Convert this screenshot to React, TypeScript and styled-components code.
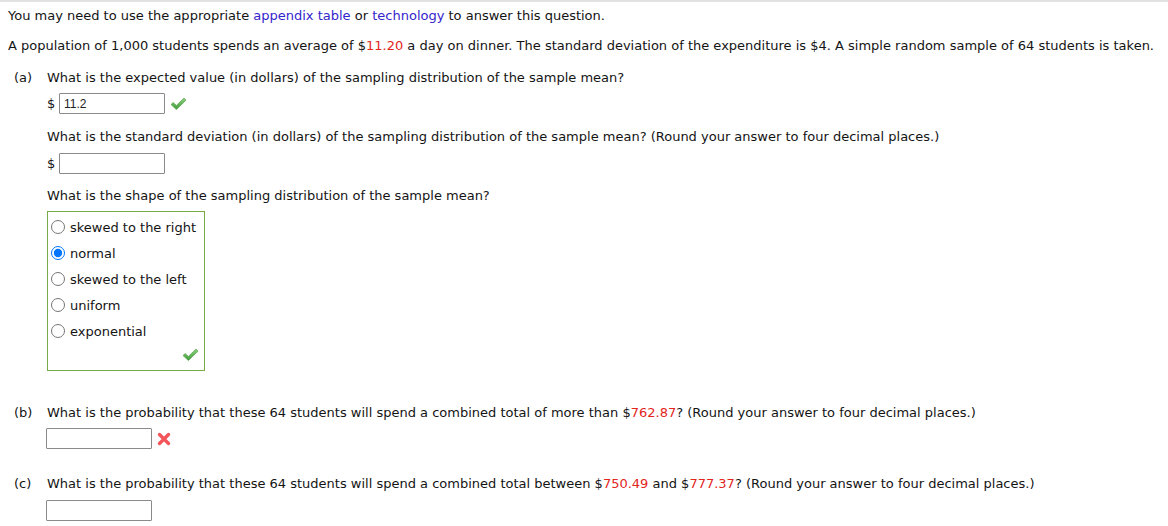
import React from 'react'
import styled, { createGlobalStyle } from 'styled-components'

const Global = createGlobalStyle`
  html, body {
    margin: 0;
    background: #fff;
  }
  body {
    border-top: 2px solid #e2e2e2;
    padding: 6px 8px 8px 8px;
    font-family: "DejaVu Sans", Verdana, sans-serif;
    font-size: 13px;
    color: #141414;
  }
`

const Line = styled.div<{ $gap?: number }>`
  line-height: 16px;
  margin-top: ${p => p.$gap ?? 0}px;
  white-space: nowrap;
`

const Link = styled.span`
  color: #3326cc;
`

const Num = styled.span`
  color: #e3261d;
`

const Part = styled.div<{ $gap: number }>`
  display: grid;
  grid-template-columns: 33px 1fr;
  padding-left: 6px;
  margin-top: ${p => p.$gap}px;
`

const Label = styled.div`
  line-height: 16px;
`

const Body = styled.div`
  display: flex;
  flex-direction: column;
`

const AnswerRow = styled.div<{ $gap?: number }>`
  display: flex;
  align-items: center;
  height: 21px;
  margin-top: ${p => p.$gap ?? 7}px;
`

const Dollar = styled.span`
  width: 12px;
  line-height: 16px;
`

const Field = styled.input<{ $shift?: number }>`
  box-sizing: border-box;
  width: 106px;
  height: 21px;
  margin: 0 0 0 ${p => p.$shift ?? 0}px;
  padding: 0 4px;
  border: 1px solid #8a8a8a;
  border-radius: 1px;
  font-family: "Liberation Sans", Arial, sans-serif;
  font-size: 12px;
  color: #222;
  outline: none;
`

const Choices = styled.div`
  box-sizing: border-box;
  width: 158px;
  margin-top: 7px;
  border: 1px solid #77ab48;
  padding: 2px 0 6px 3px;
  display: flex;
  flex-direction: column;
`

const Choice = styled.label`
  display: flex;
  align-items: center;
  height: 26px;
  gap: 5px;
`

const Radio = styled.input`
  width: 14px;
  height: 14px;
  margin: 0;
  accent-color: #0075ff;
`

const CheckSpot = styled.div`
  display: flex;
  justify-content: flex-end;
  padding-right: 5px;
  height: 20px;
  align-items: flex-end;
  padding-bottom: 2px;
  box-sizing: border-box;
`

const Mark = styled.span`
  display: inline-flex;
  margin-left: 5px;
`

const Check = () => (
  <svg width="17" height="14" viewBox="0 0 17 14">
    <defs>
      <linearGradient id="ck" x1="0" y1="0" x2="0" y2="1">
        <stop offset="0" stopColor="#8fd17e" />
        <stop offset="1" stopColor="#3e9a3a" />
      </linearGradient>
    </defs>
    <path d="M1 7.5 L3.2 5.5 L6.4 8.4 L14 1 L16 3.2 L6.4 12.6 Z" fill="url(#ck)" stroke="#4a9a40" strokeWidth="0.6" strokeLinejoin="round" />
  </svg>
)

const Cross = () => (
  <svg width="14" height="14" viewBox="0 0 14 14">
    <path d="M2.5 2.5 L11.5 11.5 M11.5 2.5 L2.5 11.5" stroke="#f2555a" strokeWidth="3.4" strokeLinecap="round" />
  </svg>
)

const shapes = ['skewed to the right', 'normal', 'skewed to the left', 'uniform', 'exponential']

const App = (): JSX.Element => {
  return (
    <>
      <Global />
      <Line>
        You may need to use the appropriate <Link>appendix table</Link> or <Link>technology</Link> to answer this question.
      </Line>
      <Line $gap={14}>
        A population of 1,000 students spends an average of $<Num>11.20</Num> a day on dinner. The standard deviation of the expenditure is $4. A simple random sample of 64 students is taken.
      </Line>

      <Part $gap={16}>
        <Label>(a)</Label>
        <Body>
          <Line>What is the expected value (in dollars) of the sampling distribution of the sample mean?</Line>
          <AnswerRow>
            <Dollar>$</Dollar>
            <Field defaultValue="11.2" />
            <Mark><Check /></Mark>
          </AnswerRow>
          <Line $gap={15}>What is the standard deviation (in dollars) of the sampling distribution of the sample mean? (Round your answer to four decimal places.)</Line>
          <AnswerRow $gap={8}>
            <Dollar>$</Dollar>
            <Field />
          </AnswerRow>
          <Line $gap={14}>What is the shape of the sampling distribution of the sample mean?</Line>
          <Choices>
            {shapes.map(s => (
              <Choice key={s}>
                <Radio type="radio" name="shape" defaultChecked={s === 'normal'} />
                {s}
              </Choice>
            ))}
            <CheckSpot><Check /></CheckSpot>
          </Choices>
        </Body>
      </Part>

      <Part $gap={34}>
        <Label>(b)</Label>
        <Body>
          <Line>What is the probability that these 64 students will spend a combined total of more than $<Num>762.87</Num>? (Round your answer to four decimal places.)</Line>
          <AnswerRow>
            <Field $shift={-1} />
            <Mark><Cross /></Mark>
          </AnswerRow>
        </Body>
      </Part>

      <Part $gap={27}>
        <Label>(c)</Label>
        <Body>
          <Line>What is the probability that these 64 students will spend a combined total between $<Num>750.49</Num> and $<Num>777.37</Num>? (Round your answer to four decimal places.)</Line>
          <AnswerRow $gap={8}>
            <Field $shift={-1} />
          </AnswerRow>
        </Body>
      </Part>
    </>
  )
}

export default App
